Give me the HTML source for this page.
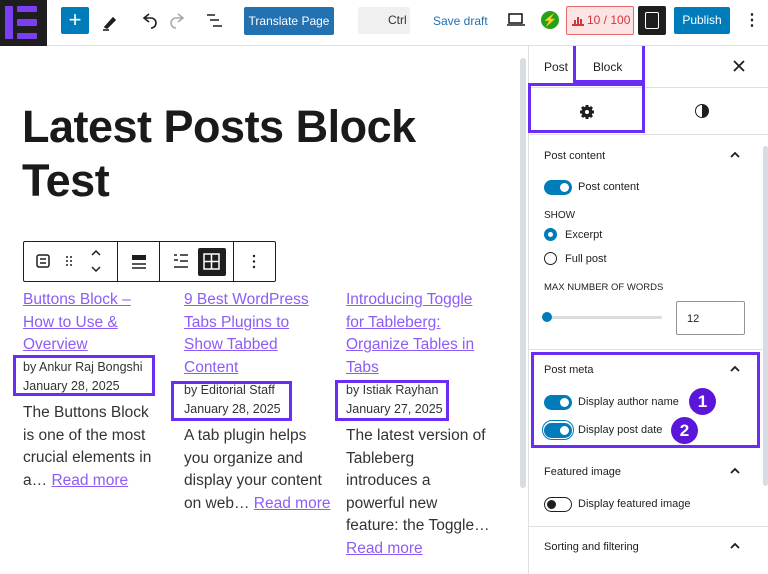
<!DOCTYPE html>
<html><head><meta charset="utf-8"><style>
*{box-sizing:border-box;margin:0;padding:0}
body{width:768px;height:574px;overflow:hidden;background:#fff;font-family:"Liberation Sans",sans-serif;position:relative;color:#1e1e1e}
.a{position:absolute}
.top{left:0;top:0;width:768px;height:46px;border-bottom:1px solid #e0e0e0;background:#fff}
.logo{left:0;top:0;width:47px;height:46px;background:#1e1e1e}
.btn{border-radius:2px}
.pu{border:3px solid #6b2cf5}
.main{font-size:15.5px;line-height:22.6px;white-space:nowrap}
.lk{color:#8d5cf6;text-decoration:underline}
.meta{font-size:12.5px;line-height:19px;color:#333;white-space:nowrap}
.ex{color:#333;font-size:15.5px;line-height:22.6px;white-space:nowrap}
.sb{left:528px;top:46px;width:240px;height:528px;border-left:1px solid #e0e0e0;font-size:11px;color:#1e1e1e}
.tog{width:28px;height:15px;border-radius:8px;background:#007cba;position:absolute}
.tog::after{content:"";position:absolute;right:3px;top:3px;width:9px;height:9px;border-radius:50%;background:#fff}
.hd{font-size:11px}
.chev{position:absolute;left:200px;width:12px;height:8px}
.num{width:27px;height:27px;border-radius:50%;background:#5b16d9;color:#fff;font-weight:bold;font-size:17px;text-align:center;line-height:27px}
.hr{height:1px;background:#e0e0e0;left:0;width:240px}
</style></head><body>
<div class="a top"></div>
<div class="a logo"><svg width="47" height="46"><rect x="5" y="6" width="8" height="33" fill="#7b3ff2"/><rect x="17" y="6" width="20" height="6" rx="1" fill="#7b3ff2"/><rect x="17" y="19" width="20" height="7" rx="1" fill="#7b3ff2"/><rect x="17" y="33" width="20" height="6" rx="1" fill="#7b3ff2"/></svg></div>
<div class="a btn" style="left:61px;top:7px;width:28px;height:27px;background:#007cba;color:#fff;font-size:22px;text-align:center;line-height:26px">+</div>
<svg class="a" style="left:100px;top:10px" width="130" height="22" fill="none" stroke="#1e1e1e" stroke-width="1.6"><path d="M5 17l8-9 2 2-8 8z" fill="#1e1e1e"/><path d="M3 20h6"/><path d="M49 12l-5-4 5-4M44 8h7a5 5 0 010 10" /><path d="M78 12l5-4-5-4M83 8h-7a5 5 0 000 10" stroke="#aaa"/><path d="M107 5h8M110 10h9M113 16h9"/></svg>
<div class="a btn" style="left:244px;top:7px;width:90px;height:28px;background:#2271b1;color:#fff;font-size:12px;text-align:center;line-height:28px">Translate Page</div>
<div class="a btn" style="left:358px;top:7px;width:52px;height:27px;background:#f0f0f0;font-size:12px;line-height:27px;padding-left:30px;color:#333;overflow:hidden">Ctrl</div>
<div class="a" style="left:433px;top:14px;font-size:12px;color:#2271b1">Save draft</div>
<svg class="a" style="left:506px;top:12px" width="20" height="16" fill="none" stroke="#1e1e1e" stroke-width="1.6"><rect x="3" y="2" width="13" height="9"/><path d="M1 13h18"/></svg>
<div class="a" style="left:541px;top:11px;width:18px;height:18px;border-radius:50%;background:#22a31a;color:#fff;font-size:12px;text-align:center;line-height:18px;font-weight:bold">⚡</div>
<div class="a btn" style="left:566px;top:6px;width:68px;height:29px;background:#fde4e4;border:1px solid #e56b6b;color:#d63638;font-size:12px;line-height:27px;padding-left:20px">10 / 100</div>
<svg class="a" style="left:572px;top:16px" width="12" height="10" fill="#d63638"><path d="M0 8h12v2H0zM2 4h2v4H2zM5 1h2v7H5zM8 3h2v5H8z"/></svg>
<div class="a btn" style="left:638px;top:6px;width:28px;height:29px;background:#1e1e1e"></div>
<div class="a" style="left:645px;top:12px;width:14px;height:17px;border:1.5px solid #fff;border-radius:2px"></div>
<div class="a btn" style="left:674px;top:7px;width:56px;height:27px;background:#007cba;color:#fff;font-size:12px;text-align:center;line-height:27px">Publish</div>
<div class="a" style="left:744px;top:10px;font-size:16px;font-weight:bold">⋮</div>

<div class="a" style="left:520px;top:58px;width:6px;height:430px;background:#d8dde3;border-radius:3px"></div>

<div class="a" style="left:22px;top:100px;font-size:45px;font-weight:bold;line-height:54px;letter-spacing:-0.5px;color:#1a1a1a">Latest Posts Block<br>Test</div>

<div class="a" style="left:23px;top:241px;width:253px;height:41px;border:1px solid #1e1e1e;border-radius:2px;background:#fff"></div>
<div class="a" style="left:117px;top:242px;width:1px;height:39px;background:#1e1e1e"></div>
<div class="a" style="left:159px;top:242px;width:1px;height:39px;background:#1e1e1e"></div>
<div class="a" style="left:233px;top:242px;width:1px;height:39px;background:#1e1e1e"></div>
<div class="a" style="left:198px;top:248px;width:28px;height:28px;background:#1e1e1e;border-radius:2px"></div>
<svg class="a" style="left:23px;top:241px" width="253" height="41" fill="none" stroke="#1e1e1e" stroke-width="1.5"><rect x="14" y="14" width="12" height="12" rx="2"/><path d="M17 18h6M17 22h6"/><g fill="#1e1e1e" stroke="none"><circle cx="44" cy="16" r="1"/><circle cx="48" cy="16" r="1"/><circle cx="44" cy="20" r="1"/><circle cx="48" cy="20" r="1"/><circle cx="44" cy="24" r="1"/><circle cx="48" cy="24" r="1"/><rect x="109" y="14" width="14" height="5"/><circle cx="231" cy="15" r="1.2"/><circle cx="231" cy="20.5" r="1.2"/><circle cx="231" cy="26" r="1.2"/></g><path d="M69 14l4-4 4 4M69 26l4 4 4-4"/><path d="M109 23h14M109 27h14" /><path d="M151 14h3M157 14h8M151 19h4M157 20h8M151 26h14"/><rect x="181" y="13" width="15" height="15" stroke="#fff"/><path d="M188.5 13v15M181 20.5h15" stroke="#fff"/></svg>

<div class="a main" style="left:23px;top:289px"><span class="lk">Buttons Block –</span><br><span class="lk">How to Use &amp;</span><br><span class="lk">Overview</span></div>
<div class="a main" style="left:184px;top:289px"><span class="lk">9 Best WordPress</span><br><span class="lk">Tabs Plugins to</span><br><span class="lk">Show Tabbed</span><br><span class="lk">Content</span></div>
<div class="a main" style="left:346px;top:289px"><span class="lk">Introducing Toggle</span><br><span class="lk">for Tableberg:</span><br><span class="lk">Organize Tables in</span><br><span class="lk">Tabs</span></div>

<div class="a pu" style="left:13px;top:355px;width:142px;height:41px"></div>
<div class="a meta" style="left:23px;top:358px">by Ankur Raj Bongshi<br>January 28, 2025</div>
<div class="a pu" style="left:171px;top:381px;width:121px;height:40px"></div>
<div class="a meta" style="left:184px;top:381px">by Editorial Staff<br>January 28, 2025</div>
<div class="a pu" style="left:335px;top:380px;width:114px;height:41px"></div>
<div class="a meta" style="left:346px;top:381px">by Istiak Rayhan<br>January 27, 2025</div>

<div class="a ex" style="left:23px;top:402px">The Buttons Block<br>is one of the most<br>crucial elements in<br>a… <span class="lk">Read more</span></div>
<div class="a ex" style="left:184px;top:425px">A tab plugin helps<br>you organize and<br>display your content<br>on web… <span class="lk">Read more</span></div>
<div class="a ex" style="left:346px;top:425px">The latest version of<br>Tableberg<br>introduces a<br>powerful new<br>feature: the Toggle…<br><span class="lk">Read more</span></div>

<div class="a sb">
 <div class="a" style="left:15px;top:14px;font-size:12px">Post</div>
 <div class="a" style="left:64px;top:14px;font-size:12px">Block</div>
 <div class="a" style="left:58px;top:37px;width:56px;height:2px;background:#007cba"></div>
 <svg class="a" style="left:204px;top:14px" width="12" height="12" stroke="#1e1e1e" stroke-width="1.8"><path d="M1 1l10 10M11 1L1 11"/></svg>
 <div class="a hr" style="top:41px"></div>
 <svg class="a" style="left:50px;top:58px" width="16" height="16"><circle cx="8" cy="8" r="5.5" fill="#1e1e1e"/><g stroke="#1e1e1e" stroke-width="3"><path d="M8 1v14M1 8h14M3 3l10 10M13 3L3 13"/></g><circle cx="8" cy="8" r="2" fill="#fff"/></svg>
 <div class="a" style="left:166px;top:58px;width:14px;height:14px;border-radius:50%;border:1.5px solid #1e1e1e;background:linear-gradient(90deg,#fff 50%,#1e1e1e 50%)"></div>
 <div class="a hr" style="top:88px"></div>
 <div class="a hd" style="left:15px;top:104px">Post content</div>
 <svg class="chev" style="top:105px" fill="none" stroke="#1e1e1e" stroke-width="1.8"><path d="M2 6l4-4 4 4"/></svg>
 <div class="tog" style="left:15px;top:134px"></div>
 <div class="a" style="left:49px;top:135px">Post content</div>
 <div class="a" style="left:15px;top:164px;font-size:10px">SHOW</div>
 <div class="a" style="left:15px;top:182px;width:13px;height:13px;border-radius:50%;border:4px solid #007cba"></div>
 <div class="a" style="left:36px;top:183px">Excerpt</div>
 <div class="a" style="left:15px;top:206px;width:13px;height:13px;border-radius:50%;border:1px solid #1e1e1e"></div>
 <div class="a" style="left:36px;top:207px">Full post</div>
 <div class="a" style="left:15px;top:236px;font-size:9.5px">MAX NUMBER OF WORDS</div>
 <div class="a" style="left:15px;top:270px;width:118px;height:3px;background:#ddd;border-radius:2px"></div>
 <div class="a" style="left:13px;top:266px;width:10px;height:10px;border-radius:50%;background:#007cba"></div>
 <div class="a" style="left:147px;top:255px;width:69px;height:34px;border:1px solid #949494;border-radius:2px;padding:11px 0 0 10px">12</div>
 <div class="a hr" style="top:303px"></div>
 <div class="a pu" style="left:2px;top:306px;width:229px;height:96px"></div>
 <div class="a hd" style="left:15px;top:318px">Post meta</div>
 <svg class="chev" style="top:319px" fill="none" stroke="#1e1e1e" stroke-width="1.8"><path d="M2 6l4-4 4 4"/></svg>
 <div class="tog" style="left:15px;top:349px"></div>
 <div class="a" style="left:49px;top:350px">Display author name</div>
 <div class="a num" style="left:160px;top:342px">1</div>
 <div class="a" style="left:13px;top:374px;width:32px;height:20px;border:1.5px solid #007cba;border-radius:10px"></div>
 <div class="tog" style="left:15px;top:377px"></div>
 <div class="a" style="left:49px;top:378px">Display post date</div>
 <div class="a num" style="left:142px;top:371px">2</div>
 <div class="a hd" style="left:15px;top:420px">Featured image</div>
 <svg class="chev" style="top:421px" fill="none" stroke="#1e1e1e" stroke-width="1.8"><path d="M2 6l4-4 4 4"/></svg>
 <div class="a" style="left:15px;top:451px;width:28px;height:15px;border-radius:8px;border:1px solid #1e1e1e"></div>
 <div class="a" style="left:18px;top:454px;width:9px;height:9px;border-radius:50%;background:#1e1e1e"></div>
 <div class="a" style="left:49px;top:452px">Display featured image</div>
 <div class="a hr" style="top:480px"></div>
 <div class="a hd" style="left:15px;top:495px">Sorting and filtering</div>
 <svg class="chev" style="top:496px" fill="none" stroke="#1e1e1e" stroke-width="1.8"><path d="M2 6l4-4 4 4"/></svg>
 <div class="a" style="left:234px;top:100px;width:5px;height:340px;background:#d8dde3;border-radius:3px"></div>
</div>
<div class="a pu" style="left:573px;top:46px;width:72px;height:37px;border-top:none"></div>
<div class="a pu" style="left:528px;top:83px;width:117px;height:50px"></div>
</body></html>
